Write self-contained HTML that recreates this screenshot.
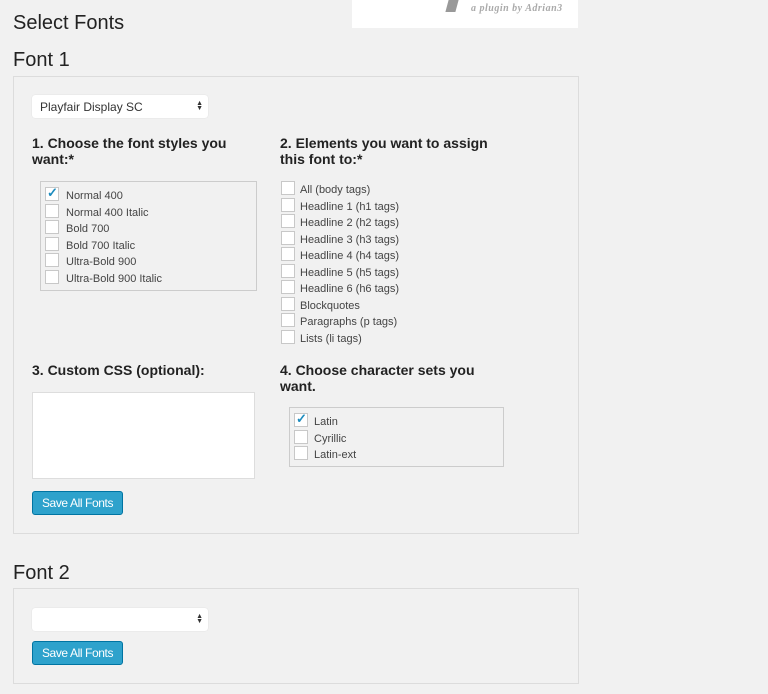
<!DOCTYPE html>
<html><head><style>
*{margin:0;padding:0;box-sizing:border-box}
body{width:768px;height:694px;background:#f1f1f1;font-family:"Liberation Sans",sans-serif;color:#222;position:relative;overflow:hidden}
.a{position:absolute}
.h1{font-size:20px;color:#222;white-space:nowrap}
.box{border:1px solid #dcdcdc;background:#f1f1f1}
.sel{background:#fff;border-radius:3px;box-shadow:0 0 1px rgba(0,0,0,.15)}
.h{font-size:14px;font-weight:bold;line-height:16px;color:#222}
.cb{position:absolute;width:14px;height:14px;background:#fff;border:1px solid #c8c8c8}
.lb{position:absolute;font-size:11px;color:#444;white-space:nowrap;line-height:14px}
.btn{background:#2ea2cc;border:1px solid #0074a2;border-radius:3px;color:#fff;font-size:12px;text-align:center;line-height:22px;letter-spacing:-.4px}
.arr{position:absolute;right:5px;top:6px;font-size:7px;line-height:5px;color:#333}
</style></head><body>
<div class="a" style="left:352px;top:0;width:226px;height:28px;background:#fff"></div>
<div class="a" style="left:447px;top:0;width:10px;height:12px;background:#999;transform:skewX(-15deg)"></div>
<div class="a" style="left:471px;top:3px;font-family:'Liberation Serif',serif;font-style:italic;font-weight:bold;font-size:10px;color:#aaa;letter-spacing:.5px">a plugin by Adrian3</div>

<div class="a h1" style="left:13px;top:12px">Select Fonts</div>
<div class="a h1" style="left:13px;top:49px">Font 1</div>

<div class="a box" style="left:13px;top:76px;width:566px;height:458px"></div>
<div class="a sel" style="left:32px;top:95px;width:176px;height:23px"><span class="a" style="left:8px;top:5px;font-size:12px;color:#333">Playfair Display SC</span><div class="arr">▲<br>▼</div></div>

<div class="a h" style="left:32px;top:135px;width:230px">1. Choose the font styles you want:*</div>
<div class="a h" style="left:280px;top:135px;width:230px">2. Elements you want to assign this font to:*</div>

<div class="a" style="left:40px;top:181px;width:217px;height:110px;border:1px solid #ccc"></div>

<div class="a h" style="left:32px;top:362px">3. Custom CSS (optional):</div>
<div class="a h" style="left:280px;top:362px;width:230px">4. Choose character sets you want.</div>
<div class="a" style="left:32px;top:392px;width:223px;height:87px;background:#fff;border:1px solid #ddd"></div>
<div class="a" style="left:289px;top:407px;width:215px;height:60px;border:1px solid #ccc"></div>

<div class="a btn" style="left:32px;top:491px;width:91px;height:24px">Save All Fonts</div>

<div class="a h1" style="left:13px;top:562px">Font 2</div>
<div class="a box" style="left:13px;top:588px;width:566px;height:96px"></div>
<div class="a sel" style="left:32px;top:608px;width:176px;height:23px"><div class="arr">▲<br>▼</div></div>
<div class="a btn" style="left:32px;top:641px;width:91px;height:24px">Save All Fonts</div>

<div id="c"></div>
<script>
var c=document.getElementById('c'),h='';
function L(x,tx,y0,items,checked){items.forEach(function(t,i){var y=y0+i*16.5;h+='<div class="cb" style="left:'+x+'px;top:'+y+'px">'+(checked===i?'<span style="position:absolute;left:1px;top:-3px;color:#1e8cbe;font-size:13px;font-weight:bold">✓</span>':'')+'</div><div class="lb" style="left:'+tx+'px;top:'+(y+2)+'px">'+t+'</div>';});}
L(45,66,187,["Normal 400","Normal 400 Italic","Bold 700","Bold 700 Italic","Ultra-Bold 900","Ultra-Bold 900 Italic"],0);
L(281,300,181,["All (body tags)","Headline 1 (h1 tags)","Headline 2 (h2 tags)","Headline 3 (h3 tags)","Headline 4 (h4 tags)","Headline 5 (h5 tags)","Headline 6 (h6 tags)","Blockquotes","Paragraphs (p tags)","Lists (li tags)"],-1);
L(294,314,413,["Latin","Cyrillic","Latin-ext"],0);
c.innerHTML=h;
</script>
</body></html>
